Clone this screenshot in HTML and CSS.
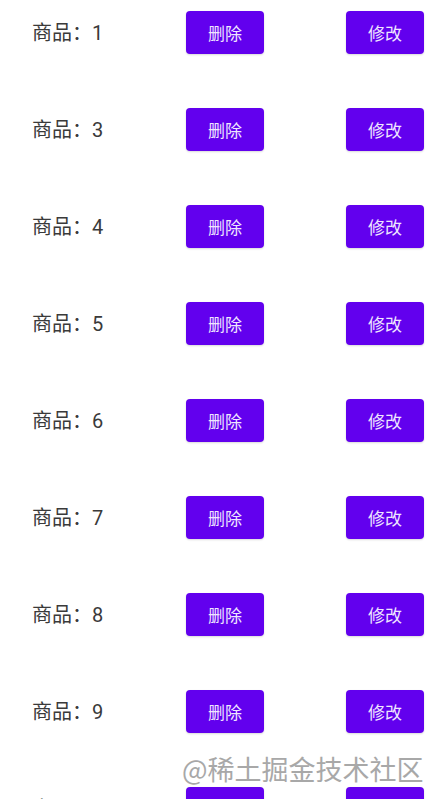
FILE: index.html
```html
<!DOCTYPE html>
<html lang="zh">
<head>
    <meta charset="UTF-8">
    <meta name="viewport" content="width=device-width, initial-scale=1.0">
    <title>商品列表</title>
    <link rel="stylesheet" href="styles.css">
</head>
<body>

    <div class="goods-list">
        <div class="goods-row">
            <span class="goods-name">商品：1</span>
            <button class="btn">删除</button>
            <button class="btn">修改</button>
        </div>
        <div class="goods-row">
            <span class="goods-name">商品：3</span>
            <button class="btn">删除</button>
            <button class="btn">修改</button>
        </div>
        <div class="goods-row">
            <span class="goods-name">商品：4</span>
            <button class="btn">删除</button>
            <button class="btn">修改</button>
        </div>
        <div class="goods-row">
            <span class="goods-name">商品：5</span>
            <button class="btn">删除</button>
            <button class="btn">修改</button>
        </div>
        <div class="goods-row">
            <span class="goods-name">商品：6</span>
            <button class="btn">删除</button>
            <button class="btn">修改</button>
        </div>
        <div class="goods-row">
            <span class="goods-name">商品：7</span>
            <button class="btn">删除</button>
            <button class="btn">修改</button>
        </div>
        <div class="goods-row">
            <span class="goods-name">商品：8</span>
            <button class="btn">删除</button>
            <button class="btn">修改</button>
        </div>
        <div class="goods-row">
            <span class="goods-name">商品：9</span>
            <button class="btn">删除</button>
            <button class="btn">修改</button>
        </div>
        <div class="goods-row">
            <span class="goods-name">商品：10</span>
            <button class="btn">删除</button>
            <button class="btn">修改</button>
        </div>
    </div>

    <div class="watermark">@稀土掘金技术社区</div>

</body>
</html>
```

FILE: styles.css
```css
html, body {
    margin: 0;
    height: 100%;
    overflow: hidden;
    background-color: #fff;
}

body {
    font-family: Roboto, "Noto Sans CJK SC", sans-serif;
    position: relative;
}

.goods-list {
    display: flex;
    flex-direction: column;
    gap: 54px;
    padding: 11px 0 0 32px;
}

.goods-row {
    display: grid;
    grid-template-columns: 154px 78px 82px 78px;
    align-items: center;
    height: 43px;
}

.goods-name {
    grid-column: 1;
    font-size: 20px;
    color: #3a3a3a;
    margin-top: -3px;
}

.btn {
    width: 78px;
    height: 43px;
    padding: 0;
    border: none;
    border-radius: 4px;
    background-color: #6200ee;
    color: #efe6ff;
    font-family: Roboto, "Noto Sans CJK SC", sans-serif;
    font-size: 17px;
    box-shadow: 0 1px 2px rgba(0, 0, 0, 0.15);
}

.btn + .btn {
    grid-column: 4;
}

.watermark {
    position: absolute;
    left: 182px;
    top: 749px;
    font-family: "Noto Sans CJK SC", sans-serif;
    font-size: 27px;
    color: #a8a8a8;
    text-shadow: 0 0 2px #fff, 0 0 2px #fff;
}
```
